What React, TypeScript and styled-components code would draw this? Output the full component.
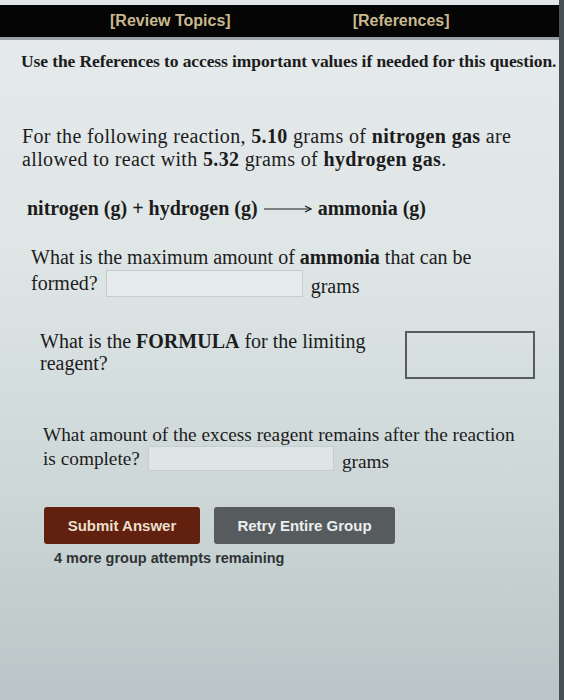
import styled, { createGlobalStyle } from 'styled-components';

const GlobalStyle = createGlobalStyle`
  html, body {
    margin: 0;
    padding: 0;
  }
  body {
    background: #cfd8da;
  }
`;

const Screen = styled.div`
  width: 564px;
  height: 700px;
  overflow: hidden;
  display: flex;
  flex-direction: column;
  background: linear-gradient(180deg, #e6eaec 0%, #dfe6e6 35%, #cdd7d8 70%, #b9c5c6 100%);
  border-right: 5px solid #465053;
  box-sizing: border-box;
  font-family: 'Liberation Serif', 'Times New Roman', serif;
  color: #1c1c1c;
`;

const TopStrip = styled.div`
  height: 5px;
  background: #e2e6e8;
`;

const NavBar = styled.div`
  height: 32px;
  background: #050505;
  display: flex;
  align-items: center;
  padding-left: 110px;
  gap: 122px;
  border-bottom: 3px solid #9aa0a3;
`;

const NavLink = styled.span`
  font-family: 'Liberation Sans', Arial, sans-serif;
  font-weight: bold;
  font-size: 16px;
  color: #c9b98e;
`;

const Notice = styled.div`
  font-weight: bold;
  font-size: 17.5px;
  line-height: 20px;
  padding: 11px 0 0 21px;
  letter-spacing: -0.1px;
`;

const Paragraph = styled.p`
  margin: 54px 0 0 22px;
  font-size: 20px;
  line-height: 23px;
  letter-spacing: 0.35px;
`;

const Equation = styled.div`
  margin: 26px 0 0 27px;
  font-size: 20px;
  line-height: 23px;
  font-weight: bold;
  display: flex;
  align-items: center;
  gap: 4px;
`;

const Arrow = styled.svg`
  width: 48px;
  height: 10px;
  margin: 0 2px;
`;

const Question = styled.div<{ $indent: number; $top: number; $size: number }>`
  margin: ${(p) => p.$top}px 0 0 ${(p) => p.$indent}px;
  font-size: ${(p) => p.$size}px;
  line-height: 23px;
`;

const AnswerLine = styled.div<{ $height: number }>`
  display: flex;
  align-items: center;
  height: ${(p) => p.$height}px;
`;

const TextInput = styled.div<{ $width: number; $height: number }>`
  width: ${(p) => p.$width}px;
  height: ${(p) => p.$height}px;
  border: 1px solid #c6cdce;
  background: rgba(240, 244, 244, 0.45);
  margin: 0 8px 0 8px;
  box-sizing: border-box;
`;

const Unit = styled.span`
  margin-top: 6px;
`;

const FormulaRow = styled.div`
  display: flex;
  justify-content: space-between;
  align-items: flex-start;
  margin: 33px 24px 0 40px;
`;

const FormulaText = styled.div`
  font-size: 20px;
  line-height: 22px;
  margin-top: 0;
`;

const FormulaBox = styled.div`
  width: 130px;
  height: 48px;
  border: 2px solid #565b5c;
  box-sizing: border-box;
  margin-top: 1px;
`;

const ButtonRow = styled.div`
  display: flex;
  align-items: flex-start;
  gap: 14px;
  margin: 36px 0 0 44px;
`;

const ActionButton = styled.div<{ $bg: string; $width: number; $color: string }>`
  width: ${(p) => p.$width}px;
  height: 37px;
  background: ${(p) => p.$bg};
  border-radius: 3px;
  display: flex;
  align-items: center;
  justify-content: center;
  font-family: 'Liberation Sans', Arial, sans-serif;
  font-weight: bold;
  font-size: 15px;
  color: ${(p) => p.$color};
`;

const Attempts = styled.div`
  margin: 6px 0 0 54px;
  font-family: 'Liberation Sans', Arial, sans-serif;
  font-weight: bold;
  font-size: 14.5px;
  line-height: 16px;
  color: #2f3334;
`;

export default function App() {
  return (
    <>
      <GlobalStyle />
      <Screen>
        <TopStrip />
        <NavBar>
          <NavLink>[Review Topics]</NavLink>
          <NavLink>[References]</NavLink>
        </NavBar>
        <Notice>Use the References to access important values if needed for this question.</Notice>

        <Paragraph>
          For the following reaction, <b>5.10</b> grams of <b>nitrogen gas</b> are
          <br />
          allowed to react with <b>5.32</b> grams of <b>hydrogen gas</b>.
        </Paragraph>

        <Equation>
          <span>nitrogen (g) + hydrogen (g)</span>
          <Arrow viewBox="0 0 48 10">
            <line x1="0" y1="5" x2="46" y2="5" stroke="#1c1c1c" strokeWidth="1.2" />
            <path d="M41 2 L47 5 L41 8" fill="none" stroke="#1c1c1c" strokeWidth="1.2" />
          </Arrow>
          <span>ammonia (g)</span>
        </Equation>

        <Question $indent={31} $top={26} $size={20}>
          What is the maximum amount of <b>ammonia</b> that can be
          <AnswerLine $height={28}>
            <span>formed?</span>
            <TextInput $width={197} $height={27} />
            <Unit>grams</Unit>
          </AnswerLine>
        </Question>

        <FormulaRow>
          <FormulaText>
            What is the <b>FORMULA</b> for the limiting
            <br />
            reagent?
          </FormulaText>
          <FormulaBox />
        </FormulaRow>

        <Question $indent={43} $top={44} $size={19.3}>
          What amount of the excess reagent remains after the reaction
          <AnswerLine $height={25}>
            <span>is complete?</span>
            <TextInput $width={186} $height={25} />
            <Unit>grams</Unit>
          </AnswerLine>
        </Question>

        <ButtonRow>
          <ActionButton $bg="#62210f" $width={156} $color="#eadfcd">
            Submit Answer
          </ActionButton>
          <ActionButton $bg="#565c5e" $width={181} $color="#eceeee">
            Retry Entire Group
          </ActionButton>
        </ButtonRow>
        <Attempts>4 more group attempts remaining</Attempts>
      </Screen>
    </>
  );
}
